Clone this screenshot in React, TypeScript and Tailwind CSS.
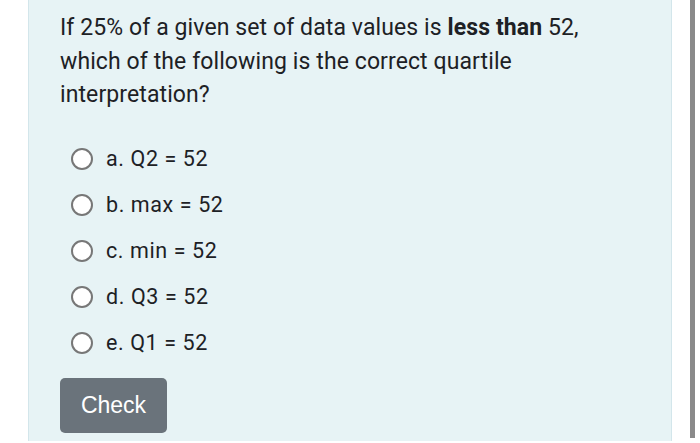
import React from "react";

const options = ["a. Q2 = 52", "b. max = 52", "c. min = 52", "d. Q3 = 52", "e. Q1 = 52"];

function Radio() {
  return (
    <span className="block w-[22px] h-[22px] rounded-full border-[2.5px] border-[#777777] bg-white shrink-0" />
  );
}

export default function App() {
  return (
    <div className="w-[700px] h-[443px] bg-white flex overflow-hidden" style={{ fontFamily: "Roboto, 'Noto Sans', sans-serif" }}>
      <div className="ml-[28px] w-[644px] h-[441px] bg-[#e7f3f5] border-l border-r border-[#d3e6eb] pl-[31px] pr-[20px] pt-[11px] text-[#1d2125]">
        <p className="text-[23px] leading-[33.5px] tracking-[0.1px]">
          If 25% of a given set of data values is <b className="font-bold">less than</b> 52,
          <br />
          which of the following is the correct quartile
          <br />
          interpretation?
        </p>
        <div className="mt-[36px] flex flex-col gap-[24px] pl-[11px]">
          {options.map((o) => (
            <label key={o} className="flex items-center gap-[13px] h-[22px]">
              <Radio />
              <span className="text-[21.5px] leading-[22px] tracking-[0.6px]">{o}</span>
            </label>
          ))}
        </div>
        <button className="mt-[24px] w-[107px] h-[55px] rounded-[5px] bg-[#6a737b] text-white text-[23px] font-['Liberation_Sans',Arial,sans-serif]">
          Check
        </button>
      </div>
      <div className="ml-[18px] w-[5px] h-[438px] bg-[#8a8a8a]" />
    </div>
  );
}
